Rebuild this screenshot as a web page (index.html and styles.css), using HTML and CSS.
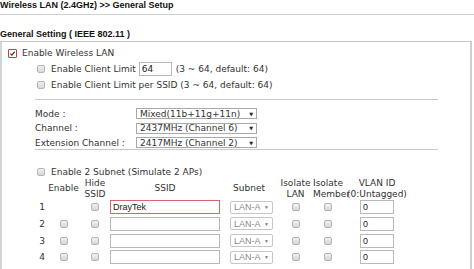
FILE: index.html
```html
<!DOCTYPE html>
<html lang="en">
<head>
    <meta charset="UTF-8">
    <title>Wireless LAN (2.4GHz) - General Setup</title>
    <link rel="stylesheet" href="styles.css">
</head>
<body>
    <div class="title">Wireless LAN (2.4GHz) &gt;&gt; General Setup</div>
    <div class="heading">General Setting ( IEEE 802.11 )</div>

    <div class="box">
        <div class="row main">
            <span class="cb checked"><svg viewBox="0 0 10 10"><path d="M2 5.2 L4.2 7.4 L8.2 2.4" /></svg></span>
            Enable Wireless LAN
        </div>

        <div class="sub">
            <div class="row limit">
                <span class="cb"></span>
                Enable Client Limit
                <input class="text num" value="64">
                (3 ~ 64, default: 64)
            </div>
            <div class="row per-ssid">
                <span class="cb"></span>
                Enable Client Limit per SSID (3 ~ 64, default: 64)
            </div>

            <div class="line"></div>

            <div class="settings">
                <div class="label">Mode :</div>
                <div class="select"><span>Mixed(11b+11g+11n)</span><i>&#9660;</i></div>
                <div class="label">Channel :</div>
                <div class="select"><span>2437MHz (Channel 6)</span><i>&#9660;</i></div>
                <div class="label">Extension Channel :</div>
                <div class="select"><span>2417MHz (Channel 2)</span><i>&#9660;</i></div>
            </div>

            <div class="line second"></div>

            <div class="row subnet">
                <span class="cb"></span>
                Enable 2 Subnet (Simulate 2 APs)
            </div>

            <div class="ssid-table">
                <div class="th"></div>
                <div class="th">Enable</div>
                <div class="th">Hide<br>SSID</div>
                <div class="th">SSID</div>
                <div class="th">Subnet</div>
                <div class="th">Isolate<br>LAN</div>
                <div class="th">Isolate<br>Member</div>
                <div class="th">VLAN ID<br>(0:Untagged)</div>

                <div class="td">1</div>
                <div class="td"></div>
                <div class="td"><span class="cb"></span></div>
                <div class="td left"><input class="text ssid active" value="DrayTek"></div>
                <div class="td left"><div class="subnet-select">LAN-A <i>&#9660;</i></div></div>
                <div class="td"><span class="cb"></span></div>
                <div class="td"><span class="cb"></span></div>
                <div class="td"><input class="text vlan" value="0"></div>

                <div class="td">2</div>
                <div class="td"><span class="cb"></span></div>
                <div class="td"><span class="cb"></span></div>
                <div class="td left"><input class="text ssid" value=""></div>
                <div class="td left"><div class="subnet-select">LAN-A <i>&#9660;</i></div></div>
                <div class="td"><span class="cb"></span></div>
                <div class="td"><span class="cb"></span></div>
                <div class="td"><input class="text vlan" value="0"></div>

                <div class="td">3</div>
                <div class="td"><span class="cb"></span></div>
                <div class="td"><span class="cb"></span></div>
                <div class="td left"><input class="text ssid" value=""></div>
                <div class="td left"><div class="subnet-select">LAN-A <i>&#9660;</i></div></div>
                <div class="td"><span class="cb"></span></div>
                <div class="td"><span class="cb"></span></div>
                <div class="td"><input class="text vlan" value="0"></div>

                <div class="td">4</div>
                <div class="td"><span class="cb"></span></div>
                <div class="td"><span class="cb"></span></div>
                <div class="td left"><input class="text ssid" value=""></div>
                <div class="td left"><div class="subnet-select">LAN-A <i>&#9660;</i></div></div>
                <div class="td"><span class="cb"></span></div>
                <div class="td"><span class="cb"></span></div>
                <div class="td"><input class="text vlan" value="0"></div>
            </div>
        </div>
    </div>
</body>
</html>
```

FILE: styles.css
```css
* {
    margin: 0;
    padding: 0;
    box-sizing: border-box;
}

body {
    background: #fff;
    color: #333;
    font-family: 'DejaVu Sans', Verdana, sans-serif;
    font-size: 9px;
    overflow: hidden;
}

.title {
    font-family: 'Liberation Sans', Arial, sans-serif;
    font-weight: bold;
    font-size: 9px;
    line-height: 11px;
    height: 15px;
    padding-bottom: 3px;
    color: #111;
    border-bottom: 1px solid #cfcfcf;
}

.heading {
    font-family: 'Liberation Sans', Arial, sans-serif;
    font-weight: bold;
    font-size: 9px;
    line-height: 12px;
    margin-top: 13px;
    margin-bottom: 1px;
    color: #111;
}

.box {
    margin-right: 2px;
    height: 230px;
    border-top: 1px solid #c4c4c4;
    border-left: 2px solid #d4d4d4;
    border-right: 2px solid #cfcfcf;
    padding-top: 4px;
}

.row {
    display: flex;
    align-items: center;
    white-space: nowrap;
}

.main {
    height: 14px;
    padding-left: 6px;
}

/* checkboxes */
.cb {
    display: inline-block;
    width: 8px;
    height: 8px;
    border: 1px solid #b4b4b4;
    border-radius: 2px;
    background: linear-gradient(#f2f2f2, #d6d6d6);
    flex: none;
}

.row .cb {
    margin-right: 6px;
}

.row .cb.checked {
    width: 9px;
    height: 9px;
    border-color: #c8383e;
    background: #fff;
    border-radius: 1px;
    margin-right: 5px;
}

.cb.checked svg {
    display: block;
    width: 7px;
    height: 7px;
    fill: none;
    stroke: #333;
    stroke-width: 1.8;
}

.sub {
    padding-left: 33px;
}

.sub > .row {
    padding-left: 2px;
}

.limit {
    height: 16px;
    margin-top: 1px;
}

.per-ssid {
    height: 15px;
}

.text {
    font-family: 'Liberation Sans', Arial, sans-serif;
    font-size: 9px;
    color: #222;
    height: 14px;
    border: 1px solid #b9b9b9;
    padding: 0 2px;
    background: #fff;
    outline: none;
}

.num {
    width: 33px;
    margin: 0 4px 0 3px;
    font-family: 'DejaVu Sans', Verdana, sans-serif;
}

.line {
    width: 403px;
    height: 1px;
    background: #c8c8c8;
    margin-top: 7px;
}

.line.second {
    margin-top: 1px;
}

.settings {
    display: grid;
    grid-template-columns: 101px 121px;
    grid-auto-rows: 11px;
    row-gap: 3.5px;
    align-items: center;
    margin-top: 8px;
}

.select {
    display: flex;
    align-items: center;
    justify-content: space-between;
    height: 11px;
    border: 1px solid #a8a8a8;
    padding: 0 3px;
    color: #333;
    background: #fff;
}

.select i,
.subnet-select i {
    font-style: normal;
    font-size: 5px;
    color: #222;
}

.subnet {
    height: 13px;
    margin-top: 15px;
}

.ssid-table {
    display: grid;
    grid-template-columns: 10px 33px 30px 110px 58px 35px 29px 70px;
    grid-template-rows: 21px repeat(4, 16.67px);
    align-items: center;
    margin-left: 2px;
}

.th {
    text-align: center;
    line-height: 10.5px;
    white-space: nowrap;
}

.td {
    display: flex;
    justify-content: center;
    align-items: center;
}

.td.left {
    justify-content: flex-start;
}

.ssid {
    width: 110px;
}

.ssid.active {
    border-color: #d9646a;
}

.subnet-select {
    display: flex;
    align-items: center;
    justify-content: space-between;
    width: 43px;
    height: 13px;
    margin-left: 10px;
    padding: 0 3px;
    border: 1px solid #c6c6c6;
    border-radius: 2px;
    color: #8a8a8a;
    font-family: 'Liberation Sans', Arial, sans-serif;
}

.subnet-select i {
    color: #777;
}

.vlan {
    width: 34px;
}
```
